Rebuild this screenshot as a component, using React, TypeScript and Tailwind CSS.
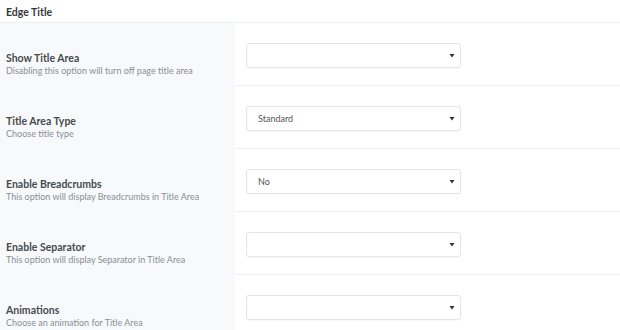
const rows = [
  { title: 'Show Title Area', desc: 'Disabling this option will turn off page title area', value: '' },
  { title: 'Title Area Type', desc: 'Choose title type', value: 'Standard' },
  { title: 'Enable Breadcrumbs', desc: 'This option will display Breadcrumbs in Title Area', value: 'No' },
  { title: 'Enable Separator', desc: 'This option will display Separator in Title Area', value: '' },
  { title: 'Animations', desc: 'Choose an animation for Title Area', value: '' },
]

function Select({ value }: { value: string }) {
  return (
    <div className="w-[215px] h-[25px] border border-[#e3e5e8] rounded-[3px] bg-white flex items-center justify-between pl-[11px] pr-[5px] shadow-[0_1px_1px_rgba(0,0,0,0.03)]">
      <span className="text-[9px] text-[#555]">{value}</span>
      <svg width="6" height="5" viewBox="0 0 6 5">
        <path d="M0.5 1 L5.5 1 L3 4.5 Z" fill="#333" />
      </svg>
    </div>
  )
}

export default function App() {
  return (
    <div className="w-[620px] h-[330px] overflow-hidden bg-white text-[#333]"
      style={{ fontFamily: 'Lato, "Open Sans", sans-serif' }}>
      <div className="h-[23px] border-b border-[#eef0f2] flex items-center pl-[6px] pt-[3px]">
        <span className="text-[10.5px] font-bold text-[#34383c]">Edge Title</span>
      </div>
      {rows.map(r => (
        <div key={r.title} className="flex h-[63px]">
          <div className="w-[235px] bg-[#f8f9fb] pl-[6px] pt-[29px]">
            <div className="text-[10.5px] font-bold leading-[13px] text-[#474b4f]">{r.title}</div>
            <div className="text-[9px] leading-[12px] text-[#8a8f94]">{r.desc}</div>
          </div>
          <div className="flex-1 pl-[11px] pt-[20px] border-b border-[#eef0f2]">
            <Select value={r.value} />
          </div>
        </div>
      ))}
    </div>
  )
}
